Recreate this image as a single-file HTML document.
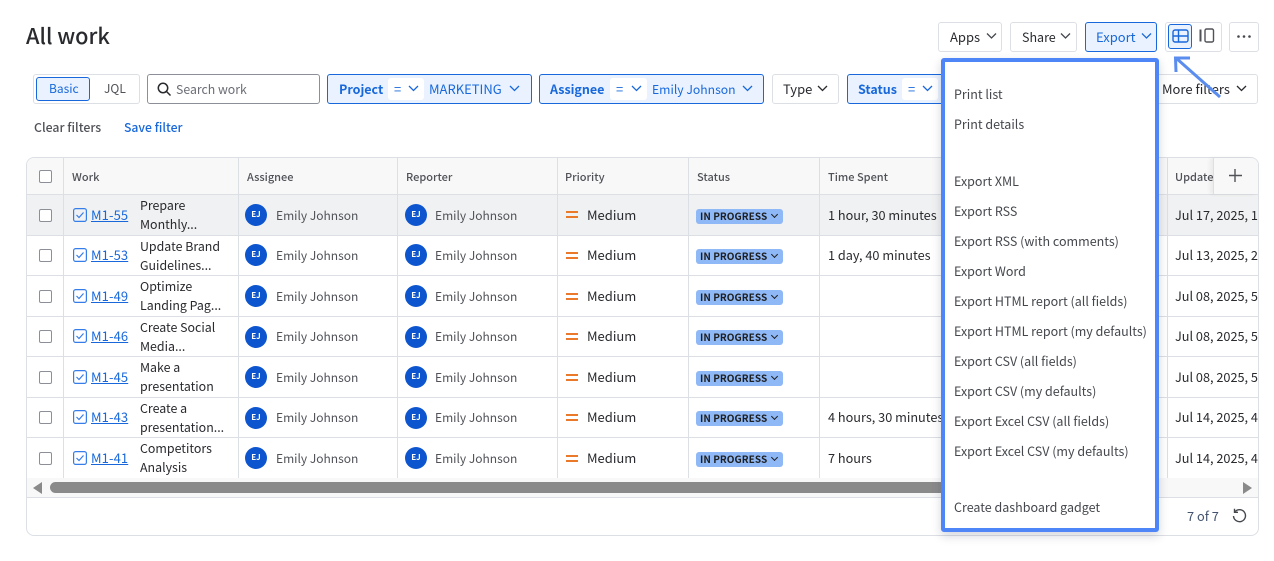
<!DOCTYPE html>
<html><head><meta charset="utf-8"><style>
*{box-sizing:border-box}
html,body{margin:0;padding:0;width:1274px;height:561px;overflow:hidden;background:#fff}
body{position:relative;font-family:"Noto Sans CJK JP","Liberation Sans",sans-serif;font-size:13px;color:#292a2e}
.a{position:absolute;white-space:nowrap}
.b{position:absolute;border:1px solid #dcdfe4;border-radius:3px;background:#fff;height:30px}
.s{position:absolute;border:1px solid #1868db;border-radius:3px;background:#e9f2fe;height:30px}
.w{position:absolute;background:#fff;border-radius:3px;height:22px;top:78px}
.t{color:#1868db}
.bold{font-weight:700}
.h{position:absolute;top:170px;font-size:11px;font-weight:500;color:#505258;line-height:14px;white-space:nowrap}
.v{position:absolute;width:1px;background:#dcdfe4}
.l{position:absolute;height:1px;left:27px;width:1231px;background:#dcdfe4}
.cb{position:absolute;left:39px;width:13px;height:13px;border:1px solid #8c8f97;border-radius:2px;background:#fff}
.e{position:absolute;width:22px;height:22px;border-radius:50%;background:#0c55cf;color:#fff;font-size:8px;font-weight:700;text-align:center;line-height:22px}
.n{position:absolute;white-space:nowrap;color:#505258;line-height:18px;font-size:12px}
.m{position:absolute;left:587px;white-space:nowrap;line-height:18px;margin-top:-1px}
.p{position:absolute;left:566px;width:12px;height:7px;background:linear-gradient(#ea7a2a 0 2px,transparent 2px 5px,#ea7a2a 5px 7px)}
.st{position:absolute;left:696px;width:87px;height:15px;border-radius:3px;background:#8fb8f6;color:#1e1f21;font-size:10px;font-weight:700;line-height:14px;padding-left:4px;white-space:nowrap;letter-spacing:.05px}
.st::after{content:"";position:absolute;right:6px;top:3px;width:4px;height:4px;border-right:1.5px solid #1e1f21;border-bottom:1.5px solid #1e1f21;transform:rotate(45deg)}
.id{position:absolute;left:91px;color:#1868db;text-decoration:underline;line-height:18px;margin-top:-1px;letter-spacing:.1px}
.ti{position:absolute;left:140px;line-height:19px;white-space:nowrap;color:#292a2e;font-size:12.4px;margin-top:-1px}
.ts{position:absolute;left:828px;line-height:18px;white-space:nowrap;font-size:12.7px;margin-top:-1px}
.up{position:absolute;left:1175px;width:83px;overflow:hidden;line-height:18px;white-space:nowrap;font-size:12.7px;margin-top:-1px}
.ic{position:absolute;left:73px;width:14px;height:14px}
.mi{position:absolute;left:954px;line-height:18px;white-space:nowrap;color:#44474c;font-size:12.5px}
svg{position:absolute;overflow:visible}
</style></head><body>

<div class="a" style="left:26px;top:20px;font-size:21.7px;font-weight:500;line-height:32px;color:#292a2e">All work</div>

<!-- top right -->
<div class="b" style="left:938px;top:22px;width:64px"></div>
<div class="a" style="left:950px;top:28px;line-height:18px">Apps</div>
<svg style="left:986px;top:32px" width="12" height="8" fill="none" stroke="#44474c" stroke-width="1.3"><path d="M1 1.5l4.5 4.5 4.5-4.500"/></svg>
<div class="b" style="left:1010px;top:22px;width:67px"></div>
<div class="a" style="left:1022px;top:28px;line-height:18px;font-size:12.500px">Share</div>
<svg style="left:1060px;top:32px" width="12" height="8" fill="none" stroke="#44474c" stroke-width="1.3"><path d="M1 1.5l4.5 4.5 4.5-4.500"/></svg>
<div class="s" style="left:1085px;top:22px;width:72px"></div>
<div class="a t" style="left:1096px;top:28px;line-height:18px">Export</div>
<svg style="left:1141px;top:32px" width="12" height="8" fill="none" stroke="#1868db" stroke-width="1.3"><path d="M1 1.5l4.5 4.5 4.5-4.500"/></svg>
<div class="b" style="left:1165px;top:22px;width:57px"></div>
<div class="s" style="left:1168px;top:24px;width:24px;height:25px"></div>
<svg style="left:1172px;top:29px" width="17" height="15" fill="none" stroke="#1868db" stroke-width="1.4"><rect x="1" y="1" width="15" height="12" rx="2"/><path d="M1 7h15M6.500 1v12"/></svg>
<svg style="left:1198px;top:28px" width="17" height="15" fill="none" stroke="#505258" stroke-width="1.4"><rect x="7" y="1" width="8.500" height="13" rx="1.500"/><path d="M2.500 1.500v12" stroke-width="2"/></svg>
<div class="b" style="left:1229px;top:22px;width:30px"></div>
<svg style="left:1237px;top:35px" width="16" height="4" fill="#44474c"><circle cx="1.5" cy="1.5" r="1.3"/><circle cx="7" cy="1.5" r="1.3"/><circle cx="12.500" cy="1.5" r="1.3"/></svg>

<!-- filters -->
<div class="b" style="left:33px;top:74px;width:107px"></div>
<div class="s" style="left:36px;top:77px;width:54px;height:24px"></div>
<div class="a t" style="left:49px;top:80px;line-height:18px;font-size:12px">Basic</div>
<div class="a" style="left:104px;top:80px;line-height:18px;color:#505258;font-size:12px">JQL</div>
<div class="b" style="left:147px;top:74px;width:173px;border-color:#8c8f97"></div>
<svg style="left:157px;top:82px" width="14" height="14" fill="none" stroke="#292a2e" stroke-width="1.5"><circle cx="6" cy="6" r="4.700"/><path d="M9.500 9.500l4 4"/></svg>
<div class="a" style="left:176px;top:80px;line-height:18px;color:#6b6e76;font-size:12.300px">Search work</div>

<div class="s" style="left:327px;top:74px;width:205px"></div>
<div class="a t bold" style="left:339px;top:80px;line-height:18px;font-size:12.500px">Project</div>
<div class="w" style="left:388px;width:36px"></div>
<div class="a t" style="left:394px;top:80px;line-height:18px">=</div>
<svg style="left:408px;top:85px" width="12" height="8" fill="none" stroke="#1868db" stroke-width="1.3"><path d="M1 1l4.500 4.500L10 1"/></svg>
<div class="a t" style="left:429px;top:80px;line-height:18px">MARKETING</div>
<svg style="left:509px;top:85px" width="12" height="8" fill="none" stroke="#1868db" stroke-width="1.3"><path d="M1 1l4.500 4.500L10 1"/></svg>

<div class="s" style="left:539px;top:74px;width:225px"></div>
<div class="a t bold" style="left:550px;top:80px;line-height:18px;font-size:12.500px">Assignee</div>
<div class="w" style="left:610px;width:37px"></div>
<div class="a t" style="left:616px;top:80px;line-height:18px">=</div>
<svg style="left:631px;top:85px" width="12" height="8" fill="none" stroke="#1868db" stroke-width="1.3"><path d="M1 1l4.500 4.500L10 1"/></svg>
<div class="a t" style="left:652px;top:80px;line-height:18px;font-size:12.200px">Emily Johnson</div>
<svg style="left:742px;top:85px" width="12" height="8" fill="none" stroke="#1868db" stroke-width="1.3"><path d="M1 1l4.500 4.500L10 1"/></svg>

<div class="b" style="left:772px;top:74px;width:67px"></div>
<div class="a" style="left:783px;top:80px;line-height:18px">Type</div>
<svg style="left:817px;top:85px" width="12" height="8" fill="none" stroke="#292a2e" stroke-width="1.3"><path d="M1 1l4.500 4.500L10 1"/></svg>

<div class="s" style="left:847px;top:74px;width:100px"></div>
<div class="a t bold" style="left:858px;top:80px;line-height:18px;font-size:12.500px">Status</div>
<div class="w" style="left:902px;width:36px"></div>
<div class="a t" style="left:908px;top:80px;line-height:18px">=</div>
<svg style="left:922px;top:85px" width="12" height="8" fill="none" stroke="#1868db" stroke-width="1.3"><path d="M1 1l4.500 4.500L10 1"/></svg>

<div class="b" style="left:1150px;top:74px;width:108px"></div>
<div class="a" style="left:1162px;top:80px;line-height:18px">More filters</div>
<svg style="left:1236px;top:85px" width="12" height="8" fill="none" stroke="#292a2e" stroke-width="1.3"><path d="M1 1l4.500 4.500L10 1"/></svg>

<div class="a" style="left:34px;top:118px;line-height:18px;color:#505258;font-size:12.300px;font-weight:500">Clear filters</div>
<div class="a t" style="left:124px;top:118px;line-height:18px;font-size:12.200px;font-weight:500">Save filter</div>

<!-- table -->
<div class="a" style="left:26px;top:157px;width:1233px;height:379px;border:1px solid #dcdfe4;border-radius:8px;overflow:hidden">
  <div style="position:absolute;left:0;top:0;width:100%;height:36px;background:#f8f8f8"></div>
  <div style="position:absolute;left:0;top:37px;width:100%;height:40px;background:#f0f1f2"></div>
  <div style="position:absolute;left:0;top:320px;width:100%;height:19px;background:#f8f8f8"></div>
</div>
<div class="l" style="top:194px"></div><div class="l" style="top:235px"></div><div class="l" style="top:275px"></div><div class="l" style="top:316px"></div><div class="l" style="top:356px"></div><div class="l" style="top:397px"></div><div class="l" style="top:437px"></div><div class="l" style="top:497px"></div>
<div class="v" style="left:63px;top:158px;height:320px"></div>
<div class="v" style="left:238px;top:158px;height:320px"></div>
<div class="v" style="left:397px;top:158px;height:320px"></div>
<div class="v" style="left:557px;top:158px;height:320px"></div>
<div class="v" style="left:688px;top:158px;height:320px"></div>
<div class="v" style="left:819px;top:158px;height:320px"></div>
<div class="v" style="left:1167px;top:158px;height:320px"></div>

<div class="cb" style="top:170px"></div>
<div class="h" style="left:72px">Work</div>
<div class="h" style="left:247px">Assignee</div>
<div class="h" style="left:406px">Reporter</div>
<div class="h" style="left:565px">Priority</div>
<div class="h" style="left:697px">Status</div>
<div class="h" style="left:828px">Time Spent</div>
<div class="h" style="left:1175px">Update</div>
<div class="a" style="left:1213px;top:158px;width:45px;height:36px;background:#f8f8f8;border-left:1px solid #dcdfe4;box-shadow:-3px 0 4px rgba(0,0,0,.06);border-top-right-radius:8px"></div>
<svg style="left:1228px;top:168px" width="15" height="15" stroke="#505258" stroke-width="1.4"><path d="M7 1v13M1 7.500h13"/></svg>

<!-- row 1 -->
<div class="cb" style="top:209px"></div>
<svg class="ic" style="top:208px" viewBox="0 0 14 14" fill="none" stroke="#357de8" stroke-width="1.200"><rect x=".6" y=".6" width="12.800" height="12.800" rx="2"/><path d="M3.500 7l2.500 2.500 4.500-5"/></svg>
<div class="id" style="top:207px">M1-55</div>
<div class="ti" style="top:197px">Prepare<br>Monthly...</div>
<div class="e" style="left:245px;top:204px">EJ</div><div class="n" style="left:276px;top:207px">Emily Johnson</div>
<div class="e" style="left:405px;top:204px">EJ</div><div class="n" style="left:435px;top:207px">Emily Johnson</div>
<div class="p" style="top:211px"></div><div class="m" style="top:207px">Medium</div>
<div class="st" style="top:209px">IN PROGRESS</div>
<div class="ts" style="top:207px">1 hour, 30 minutes</div>
<div class="up" style="top:207px">Jul 17, 2025, 12:00 PM</div>

<!-- row 2 -->
<div class="cb" style="top:249px"></div>
<svg class="ic" style="top:248px" viewBox="0 0 14 14" fill="none" stroke="#357de8" stroke-width="1.200"><rect x=".6" y=".6" width="12.800" height="12.800" rx="2"/><path d="M3.500 7l2.500 2.500 4.500-5"/></svg>
<div class="id" style="top:247px">M1-53</div>
<div class="ti" style="top:238px">Update Brand<br>Guidelines...</div>
<div class="e" style="left:245px;top:244px">EJ</div><div class="n" style="left:276px;top:247px">Emily Johnson</div>
<div class="e" style="left:405px;top:244px">EJ</div><div class="n" style="left:435px;top:247px">Emily Johnson</div>
<div class="p" style="top:252px"></div><div class="m" style="top:247px">Medium</div>
<div class="st" style="top:249px">IN PROGRESS</div>
<div class="ts" style="top:247px">1 day, 40 minutes</div>
<div class="up" style="top:247px">Jul 13, 2025, 2:00 PM</div>

<!-- row 3 -->
<div class="cb" style="top:290px"></div>
<svg class="ic" style="top:289px" viewBox="0 0 14 14" fill="none" stroke="#357de8" stroke-width="1.200"><rect x=".6" y=".6" width="12.800" height="12.800" rx="2"/><path d="M3.500 7l2.500 2.500 4.500-5"/></svg>
<div class="id" style="top:288px">M1-49</div>
<div class="ti" style="top:278px">Optimize<br>Landing Pag...</div>
<div class="e" style="left:245px;top:285px">EJ</div><div class="n" style="left:276px;top:288px">Emily Johnson</div>
<div class="e" style="left:405px;top:285px">EJ</div><div class="n" style="left:435px;top:288px">Emily Johnson</div>
<div class="p" style="top:293px"></div><div class="m" style="top:288px">Medium</div>
<div class="st" style="top:290px">IN PROGRESS</div>
<div class="up" style="top:288px">Jul 08, 2025, 5:00 PM</div>

<!-- row 4 -->
<div class="cb" style="top:330px"></div>
<svg class="ic" style="top:329px" viewBox="0 0 14 14" fill="none" stroke="#357de8" stroke-width="1.200"><rect x=".6" y=".6" width="12.800" height="12.800" rx="2"/><path d="M3.500 7l2.500 2.500 4.500-5"/></svg>
<div class="id" style="top:328px">M1-46</div>
<div class="ti" style="top:319px">Create Social<br>Media...</div>
<div class="e" style="left:245px;top:326px">EJ</div><div class="n" style="left:276px;top:328px">Emily Johnson</div>
<div class="e" style="left:405px;top:326px">EJ</div><div class="n" style="left:435px;top:328px">Emily Johnson</div>
<div class="p" style="top:333px"></div><div class="m" style="top:328px">Medium</div>
<div class="st" style="top:330px">IN PROGRESS</div>
<div class="up" style="top:328px">Jul 08, 2025, 5:00 PM</div>

<!-- row 5 -->
<div class="cb" style="top:371px"></div>
<svg class="ic" style="top:370px" viewBox="0 0 14 14" fill="none" stroke="#357de8" stroke-width="1.200"><rect x=".6" y=".6" width="12.800" height="12.800" rx="2"/><path d="M3.500 7l2.500 2.500 4.500-5"/></svg>
<div class="id" style="top:369px">M1-45</div>
<div class="ti" style="top:359px">Make a<br>presentation</div>
<div class="e" style="left:245px;top:366px">EJ</div><div class="n" style="left:276px;top:369px">Emily Johnson</div>
<div class="e" style="left:405px;top:366px">EJ</div><div class="n" style="left:435px;top:369px">Emily Johnson</div>
<div class="p" style="top:374px"></div><div class="m" style="top:369px">Medium</div>
<div class="st" style="top:371px">IN PROGRESS</div>
<div class="up" style="top:369px">Jul 08, 2025, 5:00 PM</div>

<!-- row 6 -->
<div class="cb" style="top:411px"></div>
<svg class="ic" style="top:410px" viewBox="0 0 14 14" fill="none" stroke="#357de8" stroke-width="1.200"><rect x=".6" y=".6" width="12.800" height="12.800" rx="2"/><path d="M3.500 7l2.500 2.500 4.500-5"/></svg>
<div class="id" style="top:409px">M1-43</div>
<div class="ti" style="top:400px">Create a<br>presentation...</div>
<div class="e" style="left:245px;top:407px">EJ</div><div class="n" style="left:276px;top:409px">Emily Johnson</div>
<div class="e" style="left:405px;top:407px">EJ</div><div class="n" style="left:435px;top:409px">Emily Johnson</div>
<div class="p" style="top:414px"></div><div class="m" style="top:409px">Medium</div>
<div class="st" style="top:411px">IN PROGRESS</div>
<div class="ts" style="top:409px">4 hours, 30 minutes</div>
<div class="up" style="top:409px">Jul 14, 2025, 4:00 PM</div>

<!-- row 7 -->
<div class="cb" style="top:452px"></div>
<svg class="ic" style="top:451px" viewBox="0 0 14 14" fill="none" stroke="#357de8" stroke-width="1.200"><rect x=".6" y=".6" width="12.800" height="12.800" rx="2"/><path d="M3.500 7l2.500 2.500 4.500-5"/></svg>
<div class="id" style="top:450px">M1-41</div>
<div class="ti" style="top:440px">Competitors<br>Analysis</div>
<div class="e" style="left:245px;top:447px">EJ</div><div class="n" style="left:276px;top:450px">Emily Johnson</div>
<div class="e" style="left:405px;top:447px">EJ</div><div class="n" style="left:435px;top:450px">Emily Johnson</div>
<div class="p" style="top:455px"></div><div class="m" style="top:450px">Medium</div>
<div class="st" style="top:452px">IN PROGRESS</div>
<div class="ts" style="top:450px">7 hours</div>
<div class="up" style="top:450px">Jul 14, 2025, 4:00 PM</div>

<!-- scrollbar -->
<svg style="left:33px;top:482px" width="10" height="12" fill="#8a8a8a"><path d="M0 6l9-6v12z"/></svg>
<div class="a" style="left:50px;top:482px;width:1000px;height:11px;border-radius:6px;background:#8a8a8a"></div>
<svg style="left:1243px;top:482px" width="10" height="12" fill="#8a8a8a"><path d="M9 6L0 0v12z"/></svg>

<div class="a" style="left:1187px;top:507px;line-height:18px;color:#44546f;font-size:12.800px">7 of 7</div>
<svg style="left:1232px;top:508px" width="15" height="15" fill="none" stroke="#44474c" stroke-width="1.400"><path d="M3.200 3.500A6 6 0 1 1 1.500 8"/><path d="M2.500 .8v3.500h3.500"/></svg>

<!-- dropdown -->
<div class="a" style="left:941px;top:58px;width:218px;height:474px;background:#fff;border:4px solid #4f86f7;border-radius:3px;box-shadow:0 4px 10px rgba(9,30,66,.18)"></div>
<div class="mi" style="top:85px">Print list</div>
<div class="mi" style="top:115px">Print details</div>
<div class="mi" style="top:172px">Export XML</div>
<div class="mi" style="top:202px">Export RSS</div>
<div class="mi" style="top:232px">Export RSS (with comments)</div>
<div class="mi" style="top:262px">Export Word</div>
<div class="mi" style="top:292px">Export HTML report (all fields)</div>
<div class="mi" style="top:322px">Export HTML report (my defaults)</div>
<div class="mi" style="top:352px">Export CSV (all fields)</div>
<div class="mi" style="top:382px">Export CSV (my defaults)</div>
<div class="mi" style="top:412px">Export Excel CSV (all fields)</div>
<div class="mi" style="top:442px">Export Excel CSV (my defaults)</div>
<div class="mi" style="top:498px">Create dashboard gadget</div>

<!-- arrow -->
<svg style="left:0;top:0" width="1274" height="561" fill="none" stroke="#5b8def" stroke-width="3"><path d="M1220 97L1176 58M1176 72L1175.500 58L1190 58"/></svg>
</body></html>
